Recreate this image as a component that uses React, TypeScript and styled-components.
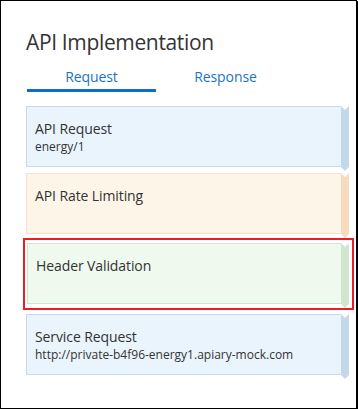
import React from "react";
import styled, { createGlobalStyle } from "styled-components";

const Global = createGlobalStyle`
  html, body { margin: 0; padding: 0; background: #ffffff; }
  body { font-family: "Open Sans", "Noto Sans", sans-serif; color: #333333; }
`;

const Frame = styled.div`
  box-sizing: border-box;
  width: 357px;
  height: 409px;
  border: 1px solid #000000;
  box-shadow: 1px 1px 0 #000000;
  padding: 0 0 0 25px;
  display: flex;
  flex-direction: column;
`;

const Title = styled.h1`
  margin: 27px 0 0 0;
  font-size: 21px;
  font-weight: 400;
  line-height: 28px;
  color: #333333;
  letter-spacing: -0.35px;
`;

const Tabs = styled.div`
  display: flex;
  margin: 9px 0 0 1px;
  height: 27px;
`;

const Tab = styled.div<{ $active?: boolean; $w: number }>`
  box-sizing: border-box;
  width: ${(p) => p.$w}px;
  text-align: center;
  font-size: 14px;
  line-height: 20px;
  padding-top: 2px;
  color: #1a73c6;
  letter-spacing: -0.1px;
  border-bottom: 3px solid ${(p) => (p.$active ? "#0a70cb" : "transparent")};
`;

const List = styled.div`
  display: flex;
  flex-direction: column;
  margin-top: 14px;
  width: 323px;
`;

type Tone = "blue" | "orange" | "green";

const tones: Record<Tone, { bg: string; border: string; strip: string }> = {
  blue: { bg: "#e9f4fc", border: "#c3dbf0", strip: "#c4d8ec" },
  orange: { bg: "#fdf5e8", border: "#f7e0c6", strip: "#f8dbbe" },
  green: { bg: "#eff9ee", border: "#cfe7cc", strip: "#d0e6cf" },
};

const Card = styled.div`
  display: flex;
  align-items: stretch;
  height: 61px;
  box-sizing: border-box;
`;

const CardBody = styled.div<{ $tone: Tone }>`
  flex: 1;
  box-sizing: border-box;
  background: ${(p) => tones[p.$tone].bg};
  border: 1px solid ${(p) => tones[p.$tone].border};
  border-right: none;
  padding: 13px 0 0 8px;
`;

const Strip = styled.div<{ $tone: Tone }>`
  width: 8px;
  margin-bottom: -4px;
  background: ${(p) => tones[p.$tone].strip};
  clip-path: polygon(0 0, 50% 4px, 100% 0, 100% calc(100% - 4px), 50% 100%, 0 calc(100% - 4px));
`;

const CardTitle = styled.div`
  font-size: 14px;
  line-height: 18px;
  color: #333333;
  letter-spacing: -0.1px;
`;

const CardSub = styled.div`
  font-size: 12px;
  line-height: 17px;
  color: #333333;
`;

const Highlight = styled.div`
  margin: 4px 0 4px -3px;
  border: 2px solid #ee1c24;
  padding: 3px 3px 4px 2px;
  width: 331px;
  box-sizing: border-box;
`;

const Gap = styled.div`
  height: 6px;
`;

function Step({ tone, title, sub }: { tone: Tone; title: string; sub?: string }) {
  return (
    <Card>
      <CardBody $tone={tone}>
        <CardTitle>{title}</CardTitle>
        {sub && <CardSub>{sub}</CardSub>}
      </CardBody>
      <Strip $tone={tone} />
    </Card>
  );
}

export default function App() {
  return (
    <>
      <Global />
      <Frame>
        <Title>API Implementation</Title>
        <Tabs>
          <Tab $active $w={129}>Request</Tab>
          <Tab $w={139}>Response</Tab>
        </Tabs>
        <List>
          <Step tone="blue" title="API Request" sub="energy/1" />
          <Gap />
          <Step tone="orange" title="API Rate Limiting" />
          <Highlight>
            <Step tone="green" title="Header Validation" />
          </Highlight>
          <Step tone="blue" title="Service Request" sub="http://private-b4f96-energy1.apiary-mock.com" />
        </List>
      </Frame>
    </>
  );
}
